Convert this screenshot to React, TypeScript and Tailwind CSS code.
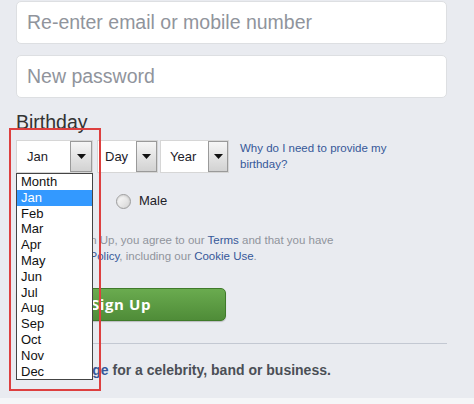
import React from 'react';

const months = ['Month', 'Jan', 'Feb', 'Mar', 'Apr', 'May', 'Jun', 'Jul', 'Aug', 'Sep', 'Oct', 'Nov', 'Dec'];

const Arrow = () => (
  <svg width="9" height="5" viewBox="0 0 9 5">
    <path d="M0 0 H9 L4.5 5 Z" fill="#111" />
  </svg>
);

const SelectBox = ({ label, width, pad, btn }: { label: string; width: string; pad: string; btn: string }) => (
  <div className={`flex h-[33px] items-stretch border border-[#d6d6d6] bg-white ${width}`}>
    <div className={`flex flex-1 items-center text-[13px] text-[#1d2129] ${pad}`}>{label}</div>
    <div className={`flex items-center justify-center border border-[#9a9a9a] bg-gradient-to-b from-[#f6f6f6] to-[#d2d2d2] ${btn}`}>
      <Arrow />
    </div>
  </div>
);

const Radio = () => (
  <div className="h-[15px] w-[15px] rounded-full border border-[#9c9c9c] bg-gradient-to-br from-[#ffffff] to-[#d4d4d4] shadow-[inset_0_1px_2px_rgba(0,0,0,0.15)]" />
);

const App = () => {
  return (
    <div className="relative min-h-[404px] w-full bg-[#f5f6f8] font-['Liberation_Sans',Arial,sans-serif]">
      <div className="h-[398px] bg-[#e9ebf0] pl-4 pt-[1px]">
        <div className="flex w-[431px] flex-col">
          <div className="flex h-[43px] items-center rounded-[5px] border border-[#dddfe2] bg-white pl-[10px] text-[19.5px] text-[#90949c]">
            Re-enter email or mobile number
          </div>
          <div className="mt-[11px] flex h-[43px] items-center rounded-[5px] border border-[#dddfe2] bg-white pl-[10px] text-[19.5px] text-[#90949c]">
            New password
          </div>

          <div className="mt-[12px] text-[19.5px] leading-6 text-[#333]">Birthday</div>

          <div className="mt-[6px] flex items-start">
            <SelectBox label="Jan" width="w-[77px]" pad="pl-[10px]" btn="w-[22px]" />
            <div className="ml-[4px]">
              <SelectBox label="Day" width="w-[61px]" pad="pl-[7px]" btn="w-[21px]" />
            </div>
            <div className="ml-[2px]">
              <SelectBox label="Year" width="w-[69px]" pad="pl-[9px]" btn="w-[20px]" />
            </div>
            <a className="ml-[11px] mt-[1px] w-[170px] text-[11.5px] leading-[15.5px] text-[#365899]">
              Why do I need to provide my birthday?
            </a>
          </div>

          <div className="mt-[14px] flex h-[28px] items-center text-[13px] text-[#1d2129]">
            <label className="flex w-[100px] items-center gap-2">
              <Radio />
              <span>Female</span>
            </label>
            <label className="flex items-center gap-2">
              <Radio />
              <span>Male</span>
            </label>
          </div>

          <p className="mt-[18px] w-[337px] text-[11.5px] leading-[15.5px] text-[#90949c]">
            By clicking Sign Up, you agree to our <a className="text-[#365899]">Terms</a> and that you have read our{' '}
            <a className="text-[#365899]">Data Policy</a>, including our <a className="text-[#365899]">Cookie Use</a>.
          </p>

          <button className="mt-[24px] flex h-[33px] w-[210px] items-center justify-center rounded-[5px] border border-[#3f7a2a] bg-gradient-to-b from-[#6aab4f] to-[#4f8c38] font-['Open_Sans',sans-serif] text-[15px] font-bold tracking-[0.6px] text-white shadow-[0_1px_1px_rgba(0,0,0,0.2)]">
            Sign Up
          </button>

          <div className="mt-[22px] h-px bg-[#c3c8d2]" />

          <div className="mt-[17px] text-[14px] font-bold leading-[18px] text-[#4b4f56]">
            <a className="text-[#365899]">Create a Page</a> for a celebrity, band or business.
          </div>
        </div>
      </div>

      {/* open month list */}
      <div className="absolute left-4 top-[173px] flex h-[207px] w-[77px] flex-col border border-[#444] bg-white text-[13px] text-[#111]">
        {months.map((m) => (
          <div
            key={m}
            className={`pl-[4px] leading-[15.8px] ${m === 'Jan' ? 'bg-[#3399ff] text-white' : ''}`}
          >
            {m}
          </div>
        ))}
      </div>

      {/* red annotation box */}
      <div className="pointer-events-none absolute left-[9px] top-[128px] h-[263px] w-[92px] border-2 border-[#dd3f3f]" />
    </div>
  );
};

export default App;
